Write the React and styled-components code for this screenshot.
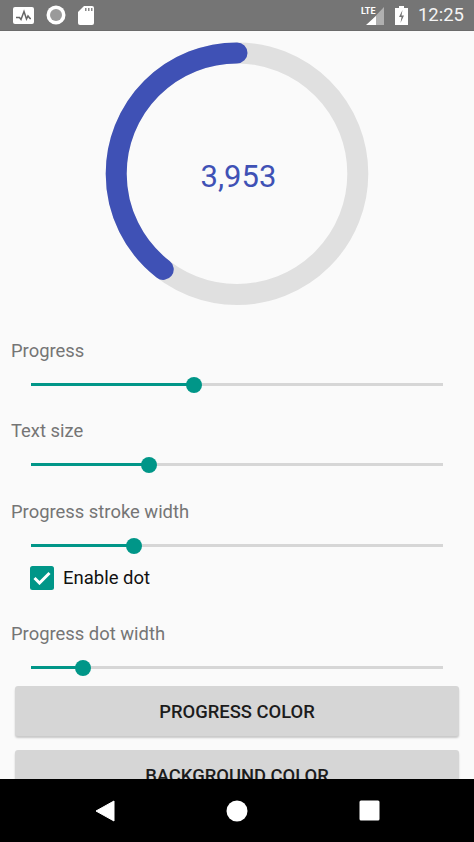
import React from 'react'
import styled, { createGlobalStyle } from 'styled-components'

const GlobalStyle = createGlobalStyle`
  html, body {
    margin: 0;
    padding: 0;
    height: 100%;
    background: #fafafa;
    font-family: Roboto, sans-serif;
  }
  #root {
    height: 100%;
  }
`

const Screen = styled.div`
  display: flex;
  flex-direction: column;
  width: 474px;
  height: 842px;
  overflow: hidden;
  background: #fafafa;
`

const StatusBar = styled.div`
  flex: none;
  display: flex;
  align-items: center;
  height: 31px;
  padding: 0 10px 0 13px;
  box-sizing: border-box;
  background: #757575;
  border-bottom: 1px solid #6b6b6b;
  color: #fff;
`

const StatusLeft = styled.div`
  display: flex;
  align-items: center;
  gap: 12px;
  flex: 1;
`

const StatusRight = styled.div`
  display: flex;
  align-items: center;
`

const Clock = styled.span`
  margin-left: 10px;
  font-size: 18.5px;
  color: #f4f4f4;
`

const Content = styled.main`
  flex: 1;
  min-height: 0;
  overflow: hidden;
`

const GaugeWrap = styled.div`
  position: relative;
  display: flex;
  justify-content: center;
  padding-top: 11px;
  height: 264px;
`

const GaugeValue = styled.div`
  position: absolute;
  top: 127px;
  left: 3px;
  right: 0;
  text-align: center;
  font-size: 31px;
  line-height: 38px;
  color: #3f51b5;
`

const Group = styled.section`
  padding: 0 31px 0 0;
  margin-top: ${(p) => p.$top}px;
`

const Label = styled.div`
  padding-left: 11px;
  font-size: 18.4px;
  line-height: 22px;
  color: #757575;
`

const SliderRow = styled.div`
  position: relative;
  height: 3px;
  margin: 21px 0 0 31px;
  background: #d6d6d6;
`

const SliderFill = styled.div`
  height: 100%;
  background: #009688;
`

const SliderThumb = styled.div`
  position: absolute;
  top: -6.5px;
  width: 16px;
  height: 16px;
  margin-left: -8px;
  border-radius: 50%;
  background: #009688;
`

const CheckRow = styled.label`
  display: flex;
  align-items: center;
  gap: 9px;
  margin: 19px 0 0 30px;
  font-size: 18.5px;
  line-height: 24px;
  color: #111;
`

const CheckBox = styled.span`
  display: flex;
  align-items: center;
  justify-content: center;
  width: 24px;
  height: 24px;
  border-radius: 2.5px;
  background: #009688;
`

const ButtonStack = styled.div`
  display: flex;
  flex-direction: column;
  gap: 14px;
  margin-top: 17px;
  padding: 0 15px;
`

const Button = styled.button`
  flex: none;
  height: 50px;
  border: 0;
  border-radius: 3px;
  background: #d6d6d6;
  box-shadow: 0 2px 2px rgba(0, 0, 0, 0.2);
  font-family: Roboto, sans-serif;
  font-size: 18.4px;
  font-weight: 500;
  color: #1c1c1c;
`

const NavBar = styled.nav`
  flex: none;
  display: flex;
  justify-content: center;
  align-items: center;
  height: 63px;
  background: #000;
`

const NavSlot = styled.div`
  width: 132px;
  display: flex;
  justify-content: center;
`

const Gauge = ({ value, max }) => {
  const r = 120.8
  const c = 2 * Math.PI * r
  return (
    <svg width="264" height="264" viewBox="0 0 264 264">
      <circle cx="132" cy="131.7" r={r} fill="none" stroke="#e0e0e0" strokeWidth="21" />
      <circle
        cx="132"
        cy="131.7"
        r={r}
        fill="none"
        stroke="#3f51b5"
        strokeWidth="21"
        strokeLinecap="round"
        strokeDasharray={`${(c * value) / max} ${c}`}
        transform="rotate(-90 132 131.7) scale(1 -1) translate(0 -263.4)"
      />
    </svg>
  )
}

const Slider = ({ pct }) => (
  <SliderRow>
    <SliderFill style={{ width: `${pct}%` }} />
    <SliderThumb style={{ left: `${pct}%` }} />
  </SliderRow>
)

const SLIDER_WIDTH = 412
const toPct = (x) => ((x - 31) / SLIDER_WIDTH) * 100

const App = () => (
  <Screen>
    <GlobalStyle />
    <StatusBar>
      <StatusLeft>
        <svg width="21" height="17" viewBox="0 0 21 17">
          <rect width="21" height="17" rx="2" fill="#fff" />
          <path d="M3 10.5h3.5l1.5 2 3-8 2.5 7.5 1.5-3 2 2.5h1" fill="none" stroke="#666" strokeWidth="1.5" />
        </svg>
        <svg width="20" height="20" viewBox="0 0 20 20">
          <circle cx="10" cy="10" r="9.5" fill="#fff" />
          <circle cx="10" cy="10" r="6" fill="#9a9a9a" />
        </svg>
        <svg width="16" height="19" viewBox="0 0 16 19">
          <path d="M6 0h8a2 2 0 0 1 2 2v15a2 2 0 0 1-2 2H2a2 2 0 0 1-2-2V6z" fill="#fff" />
          <path d="M7 2h1.5v3H7zM10 2h1.5v3H10zM13 2h1.5v3H13z" fill="#888" />
        </svg>
      </StatusLeft>
      <StatusRight>
        <svg width="24" height="19" viewBox="0 0 24 19">
          <path d="M23 1v18H6z" fill="#b0b0b0" />
          <path d="M15 10v9H5z" fill="#fff" />
          <text x="0" y="8" fontFamily="Roboto, sans-serif" fontSize="9" fontWeight="700" fill="#fff">LTE</text>
        </svg>
        <svg width="13" height="19" viewBox="0 0 13 19" style={{ marginLeft: 10 }}>
          <path d="M4 0h5v2h4v17H0V2h4z" fill="#fff" />
          <path d="M7.500 4 4 11h2.500L5.500 17 9 9.500H6.500z" fill="#757575" />
        </svg>
        <Clock>12:25</Clock>
      </StatusRight>
    </StatusBar>
    <Content>
      <GaugeWrap>
        <Gauge value={3953} max={10000} />
        <GaugeValue>3,953</GaugeValue>
      </GaugeWrap>
      <Group $top={34}>
        <Label>Progress</Label>
        <Slider pct={toPct(194)} />
      </Group>
      <Group $top={34}>
        <Label>Text size</Label>
        <Slider pct={toPct(149)} />
      </Group>
      <Group $top={35}>
        <Label>Progress stroke width</Label>
        <Slider pct={toPct(134)} />
      </Group>
      <CheckRow>
        <CheckBox>
          <svg width="18" height="14" viewBox="0 0 18 14">
            <path d="M1.500 7 6.500 12 16.500 2" fill="none" stroke="#fff" strokeWidth="3" />
          </svg>
        </CheckBox>
        Enable dot
      </CheckRow>
      <Group $top={33}>
        <Label>Progress dot width</Label>
        <Slider pct={toPct(83)} />
      </Group>
      <ButtonStack>
        <Button>PROGRESS COLOR</Button>
        <Button>BACKGROUND COLOR</Button>
      </ButtonStack>
    </Content>
    <NavBar>
      <NavSlot>
        <svg width="20" height="22" viewBox="0 0 20 22">
          <path d="M19 1v20L1 11z" fill="#fff" stroke="#fff" strokeLinejoin="round" />
        </svg>
      </NavSlot>
      <NavSlot>
        <svg width="22" height="22" viewBox="0 0 22 22">
          <circle cx="11" cy="11" r="10.500" fill="#fff" />
        </svg>
      </NavSlot>
      <NavSlot>
        <svg width="21" height="21" viewBox="0 0 21 21">
          <rect width="20" height="20" x=".5" y=".5" rx="1.500" fill="#fff" />
        </svg>
      </NavSlot>
    </NavBar>
  </Screen>
)

export default App
